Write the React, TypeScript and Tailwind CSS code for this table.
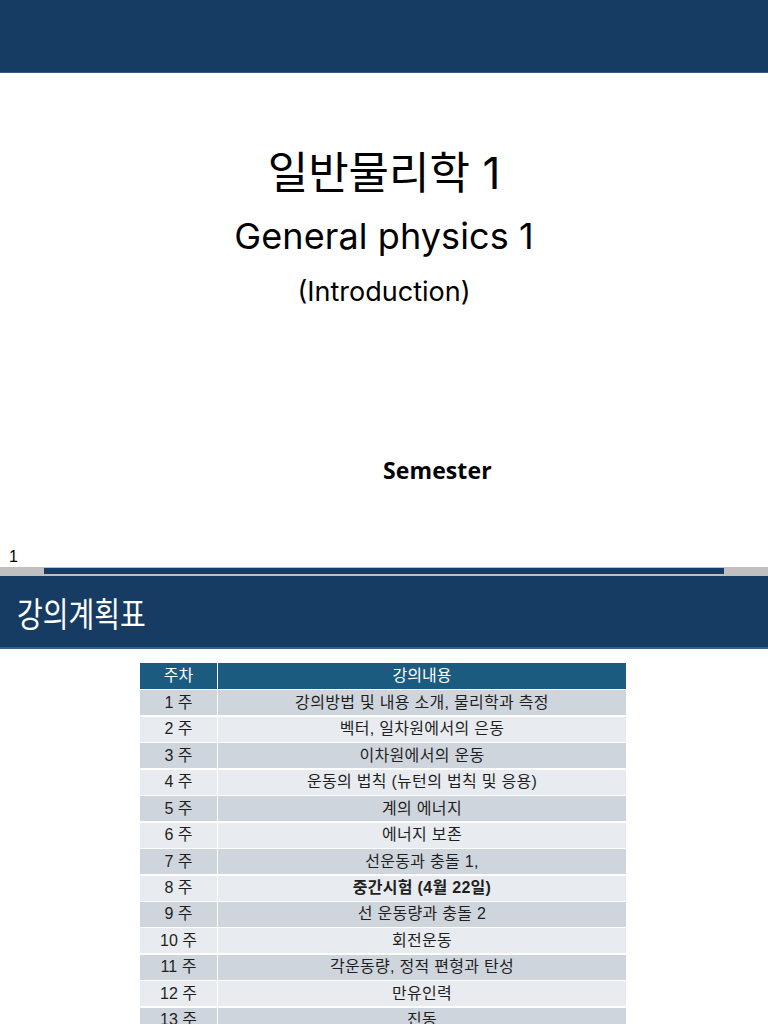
import React from "react";

// Weekly schedule rows
const schedule: { week: string; topic: string; bold?: boolean }[] = [
  { week: "1 주", topic: "강의방법 및 내용 소개, 물리학과 측정" },
  { week: "2 주", topic: "벡터, 일차원에서의 은동" },
  { week: "3 주", topic: "이차원에서의 운동" },
  { week: "4 주", topic: "운동의 법칙 (뉴턴의 법칙 및 응용)" },
  { week: "5 주", topic: "계의 에너지" },
  { week: "6 주", topic: "에너지 보존" },
  { week: "7 주", topic: "선운동과 충돌 1," },
  { week: "8 주", topic: "중간시험 (4월 22일)", bold: true },
  { week: "9 주", topic: "선 운동량과 충돌 2" },
  { week: "10 주", topic: "회전운동" },
  { week: "11 주", topic: "각운동량, 정적 편형과 탄성" },
  { week: "12 주", topic: "만유인력" },
  { week: "13 주", topic: "진동" },
];

export default function App() {
  return (
    <div className="w-[768px] h-[1024px] overflow-hidden bg-white">
      {/* Title slide */}
      <div className="h-[73px] bg-[#173c63] border-b border-[#3a5a7c]" />
      <div className="h-[494px] flex flex-col text-black">
        <h1 className="mt-[74px] text-center text-[44px] leading-[52px] font-normal font-['Inter','Noto_Sans_CJK_KR',sans-serif]">
          일반물리학 1
        </h1>
        <h2 className="mt-[16px] text-center text-[36px] leading-[42px] font-normal tracking-[0.1px] font-['Inter','Noto_Sans_CJK_KR',sans-serif]">
          General physics 1
        </h2>
        <p className="mt-[18px] text-center text-[27px] leading-[33px] font-['Inter',sans-serif]">
          (Introduction)
        </p>
        <p className="mt-[148px] pl-[383px] text-[23px] leading-[28px] font-bold tracking-[0.1px] font-['Open_Sans',sans-serif]">
          Semester
        </p>
        <div className="mt-auto pb-[1px] pl-[9px] text-[16px] leading-[19px] font-['Liberation_Sans',sans-serif]">
          1
        </div>
      </div>

      {/* Divider between slides */}
      <div className="h-[9px] bg-[#c0c0c0] px-[44px] pt-[1px]">
        <div className="h-[6px] bg-[#173c63]" />
      </div>

      {/* Second slide header */}
      <div className="h-[73px] bg-[#173c63] border-b-2 border-[#3c5f86] flex items-center pl-[17px]">
        <h2 className="origin-left scale-y-[1.22] text-white text-[28px] leading-[34px] font-normal font-['Noto_Sans_CJK_KR',sans-serif]">
          강의계획표
        </h2>
      </div>

      {/* Schedule table */}
      <div className="mt-[14px] ml-[140px] w-[486px] grid grid-cols-[77px_1fr] gap-x-px gap-y-[1.45px] text-[16px] font-['Liberation_Sans','Noto_Sans_CJK_KR',sans-serif]">
        <div className="h-[26px] bg-[#1b5b80] text-white flex items-center justify-center">
          주차
        </div>
        <div className="h-[26px] bg-[#1b5b80] text-white flex items-center justify-center">
          강의내용
        </div>
        {schedule.map((row, i) => {
          const bg = i % 2 === 0 ? "bg-[#cfd5dd]" : "bg-[#e8ebef]";
          return (
            <React.Fragment key={row.week}>
              <div className={`h-[25px] ${bg} flex items-center justify-center text-[#1f1f1f]`}>
                {row.week}
              </div>
              <div
                className={`h-[25px] ${bg} flex items-center justify-center text-[#1f1f1f] tracking-[0.3px] ${
                  row.bold ? "font-bold" : ""
                }`}
              >
                {row.topic}
              </div>
            </React.Fragment>
          );
        })}
      </div>
    </div>
  );
}
